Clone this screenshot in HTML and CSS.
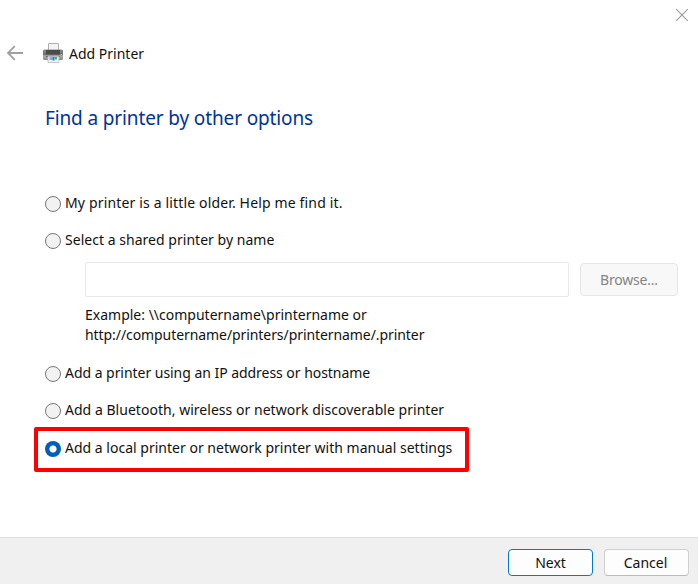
FILE: index.html
```html
<!DOCTYPE html>
<html lang="en">
<head>
<meta charset="utf-8">
<title>Add Printer</title>
<link rel="stylesheet" href="styles.css">
</head>
<body>
<div class="dialog">
  <div class="caption">
    <svg class="close" width="14" height="14" viewBox="0 0 14 14"><path d="M1.2 1.2 12.8 12.8M12.8 1.2 1.2 12.8"/></svg>
  </div>
  <header class="header">
    <svg class="back" width="18" height="16" viewBox="0 0 18 16"><path d="M17 8H2M8.800 1.200 2 8l6.800 6.800"/></svg>
    <svg class="printer" width="22" height="22" viewBox="0 0 22 22">
      <defs><linearGradient id="body" x1="0" y1="0" x2="0" y2="1"><stop offset="0" stop-color="#8a8a8a"/><stop offset=".5" stop-color="#707070"/><stop offset=".6" stop-color="#b0b0b0"/><stop offset="1" stop-color="#858585"/></linearGradient></defs>
      <path d="M6.500 1.500h10v7h-10z" fill="#f4f4f4" stroke="#b0b0b0"/>
      <rect x="1" y="7.500" width="20" height="10.500" rx="1.500" fill="url(#body)"/>
      <path d="M4 8h14v4.500H4z" fill="#4c4c4c"/>
      <path d="M4 14.500h14" stroke="#666"/>
      <path d="M6 14.500h11v6H6z" fill="#e8f3fa" stroke="#bbb" stroke-width=".8"/>
      <path d="M7.500 15h3v3h-3z" fill="#65b9e8"/><path d="M10.500 15h2v3.500h-2z" fill="#2f7fc6"/><path d="M12.500 15h2.500v2.500h-2.500z" fill="#50aa8b"/>
      <path d="M18.500 12.500H20" stroke="#8bd66e"/>
    </svg>
    <span class="title">Add Printer</span>
  </header>
  <main class="content">
    <h1 class="heading">Find a printer by other options</h1>
    <label class="option"><i class="radio"></i><span class="t-old">My printer is a little older. Help me find it.</span></label>
    <label class="option"><i class="radio"></i><span class="t-shared">Select a shared printer by name</span></label>
    <div class="share">
      <div class="share-row"><div class="field"></div><div class="button browse">Browse...</div></div>
      <p class="example"><span class="t-ex">Example: \\computername\printername or</span><br><span class="t-url">http://computername/printers/printername/.printer</span></p>
    </div>
    <label class="option"><i class="radio"></i><span class="t-ip">Add a printer using an IP address or hostname</span></label>
    <label class="option"><i class="radio"></i><span class="t-bt">Add a Bluetooth, wireless or network discoverable printer</span></label>
    <div class="highlight"><label class="option"><i class="radio checked"></i><span class="t-local">Add a local printer or network printer with manual settings</span></label></div>
  </main>
  <footer class="footer"><div class="button next">Next</div><div class="button cancel">Cancel</div></footer>
</div>
</body>
</html>
```
FILE: styles.css
```css
* { box-sizing: border-box; }
body { margin: 0; background: #fff; font: 14px/20px "Noto Sans", "Open Sans", sans-serif; color: #111; }
.dialog { width: 698px; height: 584px; display: flex; flex-direction: column; overflow: hidden; white-space: nowrap; }
.caption { height: 30px; display: flex; justify-content: flex-end; padding: 8px 9px 0 0; }
.close { fill: none; stroke: #999; stroke-width: 1.1; }
.header { height: 48px; display: flex; align-items: center; padding-left: 6px; }
.back { fill: none; stroke: #a0a0a0; stroke-width: 1.8; margin: -2px 18px 0 0; }
.printer { margin: -2px 5px 0 0; }
.content { flex: 1; padding: 27px 20px 0 45px; }
.heading { margin: 0 0 62px; font-size: 19px; line-height: 26px; font-weight: 400; letter-spacing: -.13px; color: #003399; }
.option { display: flex; align-items: center; height: 20px; margin-bottom: 17px; }
.radio { width: 16px; height: 16px; margin: 2px 4px 0 0; border: 1px solid #777; border-radius: 50%; background: #f2f2f2; }
.radio.checked { border: none; background: radial-gradient(circle, #fff 3.1px, #005fb8 4px); }
.t-old { letter-spacing: .155px; }
.t-shared { letter-spacing: .03px; }
.t-url { letter-spacing: -.075px; }
.t-ip { letter-spacing: -.04px; }
.t-bt { letter-spacing: .03px; }
.t-local { letter-spacing: .01px; }
.share { margin: -5px 0 18px 40px; }
.share-row { display: flex; align-items: center; gap: 11px; }
.field { width: 484px; height: 35px; border: 1px solid #e9e9e9; border-radius: 2px; }
.button { display: flex; align-items: center; justify-content: center; border: 1px solid #d0d0d0; border-radius: 4px; background: #fdfdfd; }
.browse { width: 98px; height: 33px; border-color: #e6e6e6; background: #f8f8f8; color: #858585; letter-spacing: -.2px; }
.example { margin: 8px 0 0; }
.highlight { width: 435px; height: 45px; margin: -10px 0 0 -11px; padding: 7px 0 0 7px; border: 4px solid #f00; border-radius: 2px; }
.footer { height: 47px; display: flex; justify-content: flex-end; gap: 11px; padding: 11px 9px 0 0; border-top: 1px solid #dfdfdf; background: #f0f0f0; }
.footer .button { width: 85px; height: 27px; }
.footer .next { border-color: #0078d4; }
.footer .cancel { border-bottom-color: #bbb; padding-right: 2px; }
```
